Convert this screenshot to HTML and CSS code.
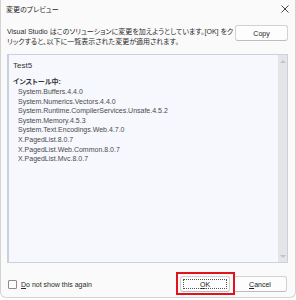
FILE: index.html
```html
<!DOCTYPE html>
<html>
<head>
    <meta charset="utf-8">
    <title>変更のプレビュー</title>
    <link rel="stylesheet" href="styles.css">
</head>
<body>

<div class="dialog">
    <div class="titlebar">
        <span class="title">変更のプレビュー</span>
        <svg class="close" width="8" height="8" viewBox="0 0 8 8">
            <path d="M0.5 0.5 L7.5 7.5 M7.5 0.5 L0.5 7.5" stroke="#333" stroke-width="0.9" fill="none"/>
        </svg>
    </div>

    <div class="message">
        <p class="message-text">Visual Studio はこのソリューションに変更を加えようとしています。[OK] をク<br>リックすると、以下に一覧表示された変更が適用されます。</p>
        <button class="btn copy">Copy</button>
    </div>

    <div class="changes">
        <div class="changes-body">
            <div class="project">Test5</div>
            <div class="section">インストール中:</div>
            <ul class="packages">
                <li>System.Buffers.4.4.0</li>
                <li>System.Numerics.Vectors.4.4.0</li>
                <li>System.Runtime.CompilerServices.Unsafe.4.5.2</li>
                <li>System.Memory.4.5.3</li>
                <li>System.Text.Encodings.Web.4.7.0</li>
                <li>X.PagedList.8.0.7</li>
                <li>X.PagedList.Web.Common.8.0.7</li>
                <li>X.PagedList.Mvc.8.0.7</li>
            </ul>
        </div>
        <div class="scrollbar">
            <span class="arrow up"></span>
            <span class="arrow down"></span>
        </div>
    </div>

    <div class="footer">
        <label class="dont-show">
            <span class="checkbox"></span>
            <span><u>D</u>o not show this again</span>
        </label>
        <div class="buttons">
            <button class="btn ok"><u>O</u>K</button>
            <button class="btn cancel"><u>C</u>ancel</button>
        </div>
    </div>
</div>

</body>
</html>
```

FILE: styles.css
```css
body {
    margin: 0;
    font-family: "Liberation Sans", "Noto Sans CJK JP", sans-serif;
    font-size: 7px;
    font-feature-settings: "palt";
    color: #1f1f1f;
    background: #ffffff;
}

.dialog {
    width: 296px;
    height: 298px;
    box-sizing: border-box;
    border: 1px solid #d3d3d3;
    border-top: none;
    border-radius: 0 0 6px 6px;
    background: #fafafa;
    display: flex;
    flex-direction: column;
}

.titlebar {
    height: 18px;
    display: flex;
    align-items: center;
    justify-content: space-between;
    padding: 0 6px 0 5px;
}

.title {
    color: #1a1a1a;
}

.message {
    display: flex;
    align-items: flex-start;
    padding: 7px 7px 0 6px;
}

.message-text {
    margin: 2px 0 0 0;
    line-height: 10px;
    color: #2a2a2a;
}

.btn {
    font-family: inherit;
    font-size: 7px;
    color: #1b1b1b;
    background: #fdfdfd;
    border: 1px solid #d2d2d2;
    border-bottom-color: #bdbdbd;
    border-radius: 3px;
    height: 16px;
    padding: 0;
    box-sizing: border-box;
}

.copy {
    width: 53px;
    margin-left: auto;
    flex-shrink: 0;
}

.changes {
    margin: 7px 7px 0 6px;
    height: 209px;
    box-sizing: border-box;
    border: 1px solid #c9d1dc;
    border-left-width: 2px;
    background: #f7f8fd;
    display: flex;
}

.changes-body {
    flex: 1;
    padding: 6px 0 0 4px;
    color: #4a4a4a;
}

.project {
    font-size: 8px;
    line-height: 10px;
    color: #333333;
}

.section {
    margin-top: 6px;
    line-height: 10px;
    font-weight: bold;
    color: #333333;
}

.packages {
    list-style: none;
    margin: 0;
    padding: 0 0 0 5px;
    line-height: 9.6px;
}

.scrollbar {
    width: 9px;
    background: #e5e5e9;
    display: flex;
    flex-direction: column;
    justify-content: space-between;
    align-items: center;
    padding: 5px 0 4px 0;
}

.arrow {
    width: 0;
    height: 0;
    border-left: 3px solid transparent;
    border-right: 3px solid transparent;
}

.arrow.up {
    border-bottom: 3px solid #c3c3c8;
}

.arrow.down {
    border-top: 3px solid #c3c3c8;
}

.footer {
    display: flex;
    align-items: center;
    padding: 13px 8px 0 7px;
}

.dont-show {
    display: flex;
    align-items: center;
    gap: 4px;
    color: #2a2a2a;
}

.checkbox {
    width: 9px;
    height: 9px;
    box-sizing: border-box;
    border: 1px solid #8c8c8c;
    border-radius: 1px;
    background: #fdfdfd;
}

.buttons {
    margin-left: auto;
    display: flex;
    gap: 3px;
}

.ok {
    width: 50px;
    position: relative;
}

.ok::before {
    content: "";
    position: absolute;
    inset: 2px;
    border: 1px dotted #555555;
}

.ok::after {
    content: "";
    position: absolute;
    top: -5px;
    left: -5px;
    right: -6px;
    bottom: -4px;
    border: 2px solid #e2131d;
}

.cancel {
    width: 54px;
}
```
